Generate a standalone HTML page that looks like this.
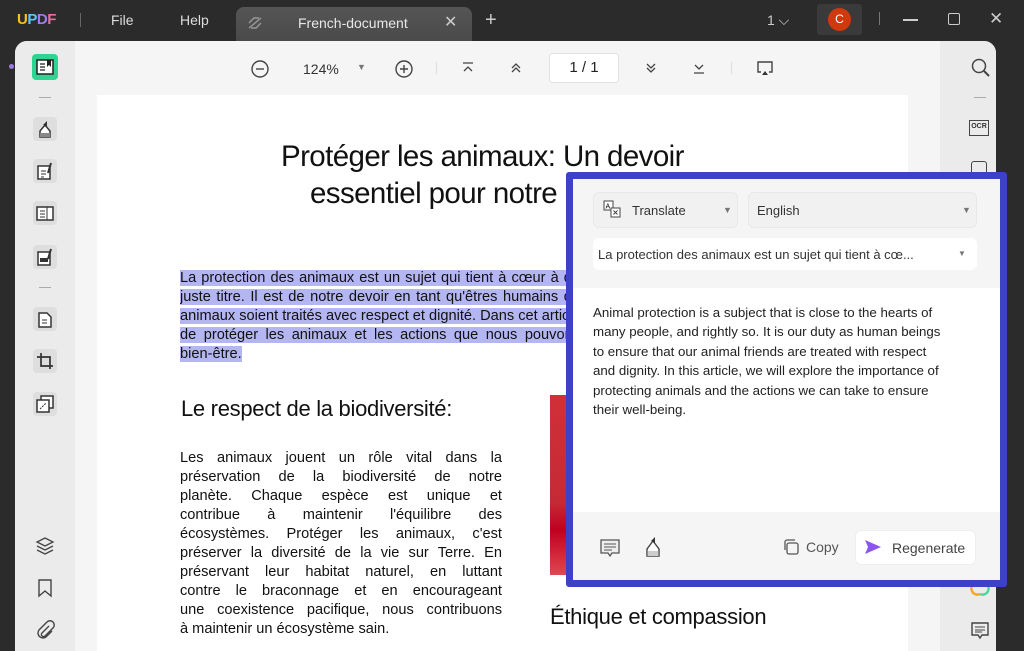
<!DOCTYPE html>
<html><head><meta charset="utf-8">
<style>
*{margin:0;padding:0;box-sizing:border-box}
body{width:1024px;height:651px;overflow:hidden;background:#2b2b2b;font-family:"Liberation Sans",sans-serif;position:relative}
.a{position:absolute}
.t{position:absolute;white-space:nowrap}
.ico{position:absolute;width:24px;height:24px;border-radius:4px;background:#dedede}
.hl{background:#b4b6f2;display:block}
.j{position:absolute;left:180px;width:322px;font-size:14.6px;color:#111;text-align:justify;text-align-last:justify;white-space:nowrap;overflow:hidden}
</style></head><body>
<!-- title bar -->
<div class="t" style="left:17px;top:11px;font-size:15px;font-weight:bold;letter-spacing:-0.5px"><span style="color:#f5c21a">U</span><span style="color:#5ec8f0">P</span><span style="color:#9c7cf0">D</span><span style="color:#ef6aa0">F</span></div>
<div class="a" style="left:80px;top:13px;width:1px;height:14px;background:#666"></div>
<div class="t" style="left:111px;top:12px;font-size:14px;color:#ddd">File</div>
<div class="t" style="left:180px;top:12px;font-size:14px;color:#ddd">Help</div>
<div class="a" style="left:236px;top:7px;width:236px;height:34px;background:linear-gradient(#555,#4a4a4a);border-radius:8px 8px 0 0"></div>
<svg class="a" style="left:246px;top:15px" width="18" height="16" viewBox="0 0 18 16"><path d="M3 8 l5-5 h5 M15 8 l-5 5 h-5 M3 13 L15 3" stroke="#999" stroke-width="1.4" fill="none"/></svg>
<div class="t" style="left:298px;top:15px;font-size:14px;color:#e8e8e8">French-document</div>
<div class="t" style="left:444px;top:12px;font-size:16px;color:#ccc">✕</div>
<div class="t" style="left:485px;top:9px;font-size:20px;color:#ccc">+</div>
<div class="t" style="left:767px;top:12px;font-size:14px;color:#ccc">1 ⌵</div>
<div class="a" style="left:817px;top:4px;width:45px;height:31px;background:#3a3a3a;border-radius:3px"></div>
<div class="a" style="left:828px;top:8px;width:23px;height:23px;border-radius:50%;background:#d0380e;color:#fff;font-size:12px;text-align:center;line-height:23px">C</div>
<div class="a" style="left:879px;top:12px;width:1px;height:13px;background:#777"></div>
<div class="a" style="left:903px;top:19px;width:15px;height:1.5px;background:#ccc"></div>
<div class="a" style="left:948px;top:13px;width:12px;height:12px;border:1.5px solid #ccc;border-radius:2px"></div>
<div class="t" style="left:989px;top:9px;font-size:17px;color:#ccc">✕</div>
<!-- main -->
<div class="a" style="left:15px;top:41px;width:981px;height:610px;background:#f5f5f5;border-radius:12px 12px 0 0"></div>
<div class="a" style="left:15px;top:41px;width:60px;height:610px;background:#ebebeb;border-radius:12px 0 0 0"></div>
<div class="a" style="left:940px;top:41px;width:56px;height:610px;background:#ebebeb;border-radius:0 12px 0 0"></div>
<div class="a" style="left:9px;top:64px;width:5px;height:5px;border-radius:50%;background:#9a7ae0"></div>
<!-- left icons -->
<div class="a" style="left:32px;top:54px;width:26px;height:26px;border-radius:4px;background:#2ed592"></div>
<svg class="a" style="left:35px;top:57px" width="20" height="20"><path d="M2 3h16v14H2z" fill="#fff" stroke="#222" stroke-width="1.5"/><path d="M5 7h5M5 10h5M5 13h5" stroke="#222" stroke-width="1.3"/><path d="M12 3v7l2-2 2 2V3z" fill="#222"/></svg>
<div class="a" style="left:39px;top:97px;width:12px;height:1px;background:#aaa"></div>
<div class="ico" style="left:33px;top:117px"></div><svg class="a" style="left:35px;top:119px" width="20" height="20"><path d="M5 18 V12 L10 6 L15 12 V18Z" fill="#fff" stroke="#333" stroke-width="1.5"/><path d="M8 6 l4-4 v5z" fill="#333"/><rect x="5" y="14" width="10" height="4" fill="#888"/></svg>
<div class="ico" style="left:33px;top:159px"></div><svg class="a" style="left:35px;top:161px" width="20" height="20"><rect x="3" y="5" width="12" height="13" fill="#fff" stroke="#333" stroke-width="1.5"/><path d="M6 10h5M6 13h5M6 16h3" stroke="#333"/><path d="M16 2 l-3 10" stroke="#333" stroke-width="2"/></svg>
<div class="ico" style="left:33px;top:201px"></div><svg class="a" style="left:35px;top:203px" width="20" height="20"><rect x="2" y="4" width="16" height="13" fill="#fff" stroke="#333" stroke-width="1.5"/><path d="M12 4v13M5 8h5M5 11h5M5 14h5" stroke="#333"/></svg>
<div class="ico" style="left:33px;top:245px"></div><svg class="a" style="left:35px;top:247px" width="20" height="20"><rect x="3" y="5" width="12" height="13" fill="#fff" stroke="#333" stroke-width="1.5"/><rect x="5" y="11" width="8" height="4" fill="#333"/><path d="M16 2 l-3 10" stroke="#333" stroke-width="2"/></svg>
<div class="a" style="left:39px;top:287px;width:12px;height:1px;background:#aaa"></div>
<div class="ico" style="left:33px;top:307px"></div><svg class="a" style="left:35px;top:309px" width="20" height="20"><path d="M4 4h8l4 4v10H4z" fill="#fff" stroke="#333" stroke-width="1.5"/><path d="M7 11h5M7 14h5" stroke="#333"/></svg>
<div class="ico" style="left:33px;top:349px"></div><svg class="a" style="left:35px;top:351px" width="20" height="20"><path d="M6 2v13h12M2 6h13v12" fill="none" stroke="#333" stroke-width="1.7"/></svg>
<div class="ico" style="left:33px;top:392px"></div><svg class="a" style="left:35px;top:394px" width="20" height="20"><rect x="6" y="2" width="12" height="12" fill="#fff" stroke="#333" stroke-width="1.5"/><rect x="2" y="6" width="12" height="12" fill="#fff" stroke="#333" stroke-width="1.5"/><path d="M5 15l6-6" stroke="#333" stroke-dasharray="2 1"/></svg>
<svg class="a" style="left:35px;top:535px" width="20" height="20"><path d="M10 3l8 4-8 4-8-4z M2 11l8 4 8-4 M2 15l8 4 8-4" fill="none" stroke="#444" stroke-width="1.3"/></svg>
<svg class="a" style="left:37px;top:578px" width="16" height="20"><path d="M2 2h12v16l-6-5-6 5z" fill="none" stroke="#444" stroke-width="1.4"/></svg>
<svg class="a" style="left:35px;top:620px" width="20" height="20"><path d="M14 6l-7 7a2 2 0 0 0 3 3l8-8a4 4 0 0 0-6-6l-8 8a5 5 0 0 0 7 7l6-6" fill="none" stroke="#444" stroke-width="1.4"/></svg>
<!-- right icons -->
<svg class="a" style="left:970px;top:57px" width="22" height="22"><circle cx="9" cy="9" r="6.5" fill="none" stroke="#444" stroke-width="1.5"/><path d="M14 14l5 5" stroke="#444" stroke-width="2"/></svg>
<div class="a" style="left:974px;top:97px;width:12px;height:1px;background:#aaa"></div>
<div class="a" style="left:969px;top:120px;width:20px;height:16px;border:1.4px solid #444;font-size:7px;font-weight:bold;text-align:center;line-height:11px;color:#333">OCR</div>
<div class="a" style="left:971px;top:161px;width:16px;height:12px;border:1.4px solid #444;border-bottom:none;border-radius:3px 3px 0 0"></div>
<svg class="a" style="left:969px;top:582px" width="22" height="16"><path d="M3 4a6 6 0 0 0 8 8" stroke="#f5a623" stroke-width="2.5" fill="none"/><path d="M11 12a6 6 0 0 0 8-8" stroke="#4cd6a0" stroke-width="2.5" fill="none"/></svg>
<svg class="a" style="left:970px;top:620px" width="20" height="20"><path d="M2 3h16v12h-6l-2 3-2-3H2z" fill="none" stroke="#444" stroke-width="1.4"/><path d="M5 7h10M5 10h10M5 12h7" stroke="#444"/></svg>
<!-- toolbar -->
<svg class="a" style="left:250px;top:59px" width="20" height="20"><circle cx="10" cy="10" r="8" fill="none" stroke="#444" stroke-width="1.4"/><path d="M6 10h8" stroke="#444" stroke-width="1.4"/></svg>
<div class="t" style="left:303px;top:61px;font-size:14px;color:#333">124%</div>
<div class="t" style="left:357px;top:62px;font-size:9px;color:#777">▼</div>
<svg class="a" style="left:394px;top:59px" width="20" height="20"><circle cx="10" cy="10" r="8" fill="none" stroke="#444" stroke-width="1.4"/><path d="M6 10h8M10 6v8" stroke="#444" stroke-width="1.4"/></svg>
<div class="a" style="left:436px;top:62px;width:1px;height:12px;background:#ddd"></div>
<svg class="a" style="left:460px;top:60px" width="16" height="16"><path d="M3 3h10M4 11l4-4 4 4" fill="none" stroke="#444" stroke-width="1.3"/></svg>
<svg class="a" style="left:508px;top:60px" width="16" height="16"><path d="M4 8l4-4 4 4M4 12l4-4 4 4" fill="none" stroke="#444" stroke-width="1.3"/></svg>
<div class="a" style="left:549px;top:53px;width:70px;height:30px;background:#fff;border:1px solid #e2e2e2;border-radius:4px;font-size:15px;text-align:center;line-height:28px;color:#222">1 / 1</div>
<svg class="a" style="left:643px;top:60px" width="16" height="16"><path d="M4 4l4 4 4-4M4 8l4 4 4-4" fill="none" stroke="#444" stroke-width="1.3"/></svg>
<svg class="a" style="left:691px;top:60px" width="16" height="16"><path d="M4 5l4 4 4-4M3 13h10" fill="none" stroke="#444" stroke-width="1.3"/></svg>
<div class="a" style="left:731px;top:62px;width:1px;height:12px;background:#ddd"></div>
<svg class="a" style="left:755px;top:59px" width="20" height="18"><path d="M6 13H3V3h14v10h-3" fill="none" stroke="#444" stroke-width="1.4" /><path d="M7 16l3-4 3 4z" fill="#333"/></svg>
<!-- page -->
<div class="a" style="left:97px;top:95px;width:811px;height:556px;background:#fff"></div>
<div class="t" style="left:281px;top:140px;font-size:29.5px;color:#111;letter-spacing:-0.6px">Protéger les animaux: Un devoir</div>
<div class="t" style="left:310px;top:177px;font-size:29.5px;color:#111;letter-spacing:-0.6px">essentiel pour notre</div>
<div class="j" style="top:270px;width:400px"><span class="hl">La protection des animaux est un sujet qui tient à cœur à de</span></div>
<div class="j" style="top:289px;width:400px"><span class="hl">juste titre. Il est de notre devoir en tant qu'êtres humains de</span></div>
<div class="j" style="top:308px;width:400px"><span class="hl">animaux soient traités avec respect et dignité. Dans cet article</span></div>
<div class="j" style="top:327px;width:400px"><span class="hl">de protéger les animaux et les actions que nous pouvons</span></div>
<div class="j" style="top:346px;text-align-last:left"><span class="hl" style="display:inline">bien-être.</span></div>
<div class="t" style="left:181px;top:396px;font-size:22px;color:#111;letter-spacing:-0.3px">Le respect de la biodiversité:</div>
<div class="j" style="top:450px">Les animaux jouent un rôle vital dans la</div>
<div class="j" style="top:469px">préservation de la biodiversité de notre</div>
<div class="j" style="top:488px">planète. Chaque espèce est unique et</div>
<div class="j" style="top:507px">contribue à maintenir l'équilibre des</div>
<div class="j" style="top:526px">écosystèmes. Protéger les animaux, c'est</div>
<div class="j" style="top:545px">préserver la diversité de la vie sur Terre. En</div>
<div class="j" style="top:564px">préservant leur habitat naturel, en luttant</div>
<div class="j" style="top:583px">contre le braconnage et en encourageant</div>
<div class="j" style="top:602px">une coexistence pacifique, nous contribuons</div>
<div class="j" style="top:621px;text-align-last:left">à maintenir un écosystème sain.</div>
<div class="a" style="left:550px;top:395px;width:20px;height:180px;background:linear-gradient(#d03038,#c42a35 60%,#c00020 75%,#e04850)"></div>
<div class="t" style="left:550px;top:604px;font-size:22px;color:#111;letter-spacing:-0.3px">Éthique et compassion</div>
<!-- popup -->
<div class="a" style="left:566px;top:172px;width:441px;height:415px;background:#f5f5f5;border:7px solid #3d40c9;border-radius:3px"></div>
<div class="a" style="left:593px;top:192px;width:145px;height:36px;background:#f1f1f1;border:1px solid #e8e8e8;border-radius:6px"></div>
<svg class="a" style="left:603px;top:200px" width="18" height="18"><rect x="1" y="1" width="9" height="9" fill="#fff" stroke="#444"/><rect x="8" y="8" width="9" height="9" fill="#fff" stroke="#444"/><text x="2.5" y="8.5" font-size="7" font-family="Liberation Sans">A</text><path d="M10.5 10.5l4 4M14.5 10.5l-4 4" stroke="#444"/></svg>
<div class="t" style="left:632px;top:203px;font-size:13px;color:#333">Translate</div>
<div class="t" style="left:723px;top:205px;font-size:9px;color:#777">▼</div>
<div class="a" style="left:748px;top:192px;width:229px;height:36px;background:#f1f1f1;border:1px solid #e8e8e8;border-radius:6px"></div>
<div class="t" style="left:757px;top:203px;font-size:13px;color:#333">English</div>
<div class="t" style="left:962px;top:205px;font-size:9px;color:#777">▼</div>
<div class="a" style="left:593px;top:238px;width:384px;height:32px;background:#fff;border-radius:6px"></div>
<div class="t" style="left:598px;top:247px;font-size:13px;color:#333">La protection des animaux est un sujet qui tient à cœ...</div>
<div class="t" style="left:958px;top:249px;font-size:8px;color:#777">▼</div>
<div class="a" style="left:573px;top:288px;width:427px;height:224px;background:#fff"></div>
<div class="t" style="left:593px;top:303px;font-size:13.3px;line-height:19.4px;color:#222">Animal protection is a subject that is close to the hearts of<br>many people, and rightly so. It is our duty as human beings<br>to ensure that our animal friends are treated with respect<br>and dignity. In this article, we will explore the importance of<br>protecting animals and the actions we can take to ensure<br>their well-being.</div>
<svg class="a" style="left:599px;top:537px" width="22" height="22"><path d="M2 3h18v13h-7l-2 3-2-3H2z" fill="#eee" stroke="#555" stroke-width="1.3"/><path d="M5 7h12M5 10h12M5 13h8" stroke="#555"/></svg>
<svg class="a" style="left:643px;top:535px" width="22" height="24"><path d="M4 21V14L10 6L16 14V21Z" fill="#fff" stroke="#444" stroke-width="1.4"/><path d="M8 6l4-4v6z" fill="#333"/><rect x="4.5" y="16" width="11" height="5" fill="#ccc"/></svg>
<svg class="a" style="left:782px;top:538px" width="18" height="18"><rect x="5" y="5" width="11" height="11" rx="2" fill="none" stroke="#555" stroke-width="1.3"/><path d="M3 12V4a2 2 0 0 1 2-2h8" fill="none" stroke="#555" stroke-width="1.3"/></svg>
<div class="t" style="left:806px;top:539px;font-size:14px;color:#555">Copy</div>
<div class="a" style="left:855px;top:530px;width:121px;height:35px;background:#fff;border:1px solid #eee;border-radius:6px"></div>
<svg class="a" style="left:864px;top:539px" width="18" height="16"><path d="M1 1l16 7-16 7 3-7z" fill="#8b55f0"/></svg>
<div class="t" style="left:892px;top:540px;font-size:14px;color:#444">Regenerate</div>
</body></html>
